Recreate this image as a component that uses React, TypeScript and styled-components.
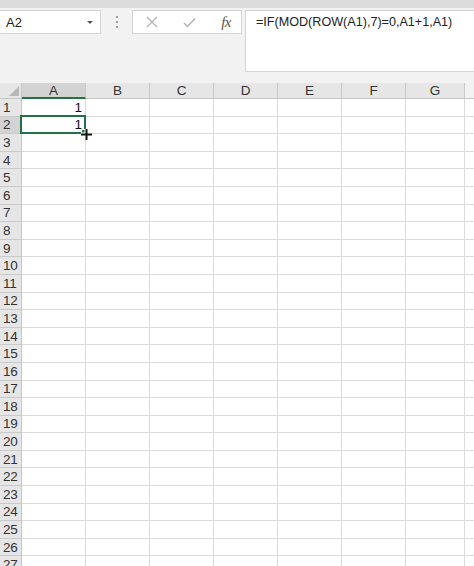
import styled, { createGlobalStyle } from "styled-components";

const GlobalStyle = createGlobalStyle`
  html, body {
    margin: 0;
    padding: 0;
    background: #ffffff;
    overflow: hidden;
  }
  body {
    font-family: "Liberation Sans", Arial, sans-serif;
  }
`;

const GREEN = "#217346";
const GRID = "#dadada";

const Sheet = styled.div`
  width: 474px;
  height: 566px;
  display: flex;
  flex-direction: column;
  overflow: hidden;
`;

const TopStrip = styled.div`
  height: 8px;
  background: #dcdcdc;
`;

const Toolbar = styled.div`
  display: flex;
  align-items: flex-start;
  background: #f2f2f2;
  padding-top: 2px;
  height: 75px;
  box-sizing: border-box;
`;

const NameBox = styled.div`
  width: 101px;
  height: 24px;
  box-sizing: border-box;
  background: #fff;
  border: 1px solid #d4d4d4;
  border-left: none;
  display: flex;
  align-items: center;
  justify-content: space-between;
  padding: 0 7px 0 6px;
  font-size: 13px;
  color: #222;
`;

const DropArrow = styled.span`
  width: 0;
  height: 0;
  border-left: 3px solid transparent;
  border-right: 3px solid transparent;
  border-top: 3px solid #555;
`;

const Grip = styled.div`
  width: 31px;
  height: 24px;
  display: flex;
  flex-direction: column;
  align-items: center;
  justify-content: center;
  gap: 3px;
  span {
    width: 2px;
    height: 2px;
    background: #a0a0a0;
  }
`;

const FxButtons = styled.div`
  width: 110px;
  height: 24px;
  box-sizing: border-box;
  background: #fff;
  border: 1px solid #d4d4d4;
  display: flex;
  align-items: center;
  justify-content: space-between;
  padding: 0 10px 0 13px;
`;

const FxLabel = styled.span`
  font-family: "Liberation Serif", "Times New Roman", serif;
  font-style: italic;
  font-size: 15px;
  color: #555;
  letter-spacing: -0.5px;
`;

const FormulaBox = styled.div`
  flex: 1;
  margin-left: 3px;
  height: 62px;
  box-sizing: border-box;
  background: #fff;
  border: 1px solid #d4d4d4;
  border-right: none;
  padding: 4px 0 0 10px;
  font-size: 12.6px;
  color: #222;
`;

const Grid = styled.div`
  flex: 1;
  display: grid;
  grid-template-columns: 22px repeat(6, 64px) 59px 1fr;
  grid-template-rows: 16px;
  grid-auto-rows: 17.6px;
  align-content: start;
  overflow: hidden;
  font-size: 13.5px;
  background: #fff;
`;

const Corner = styled.div`
  position: relative;
  background: #e6e6e6;
  border-right: 1px solid #c6c6c6;
  border-bottom: 1px solid #c6c6c6;
  box-sizing: border-box;
  &::after {
    content: "";
    position: absolute;
    right: 2px;
    bottom: 2px;
    width: 0;
    height: 0;
    border-left: 10px solid transparent;
    border-bottom: 10px solid #b9b9b9;
  }
`;

const ColHeader = styled.div<{ $active?: boolean }>`
  background: ${(p) => (p.$active ? "#d3d3d3" : "#e6e6e6")};
  border-right: 1px solid #c9c9c9;
  border-bottom: ${(p) => (p.$active ? `2px solid ${GREEN}` : "1px solid #c6c6c6")};
  box-sizing: border-box;
  display: flex;
  align-items: center;
  justify-content: center;
  color: #333;
  font-size: 13.5px;
`;

const HeaderFill = styled.div`
  background: #f2f2f2;
  border-bottom: 1px solid #c6c6c6;
`;

const RowHeader = styled.div<{ $active?: boolean }>`
  background: ${(p) => (p.$active ? "#d3d3d3" : "#e6e6e6")};
  border-right: ${(p) => (p.$active ? `2px solid ${GREEN}` : "1px solid #c6c6c6")};
  border-bottom: 1px solid #c9c9c9;
  box-sizing: border-box;
  display: flex;
  align-items: center;
  padding-left: 3px;
  color: #333;
  font-size: 13.5px;
  letter-spacing: -0.3px;
`;

const Cell = styled.div`
  position: relative;
  border-right: 1px solid ${GRID};
  border-bottom: 1px solid ${GRID};
  box-sizing: border-box;
  display: flex;
  align-items: center;
  justify-content: flex-end;
  padding-right: 3px;
  color: #111;
`;

const EdgeCell = styled.div`
  border-bottom: 1px solid ${GRID};
`;

const ActiveFrame = styled.div`
  position: absolute;
  left: -2px;
  top: -2px;
  right: -1px;
  bottom: -1px;
  border: 2px solid ${GREEN};
  pointer-events: none;
`;

const FillHandle = styled.div`
  position: absolute;
  right: -4px;
  bottom: -4px;
  width: 5px;
  height: 5px;
  background: ${GREEN};
  border: 1px solid #fff;
`;

const PlusCursor = styled.svg`
  position: absolute;
  right: -8px;
  bottom: -8px;
  z-index: 2;
`;

const columns = ["A", "B", "C", "D", "E", "F", "G"];
const rowCount = 28;
const values: Record<string, string> = { A1: "1", A2: "1" };
const active = { col: "A", row: 2 };

function App() {
  return (
    <>
      <GlobalStyle />
      <Sheet>
        <TopStrip />
        <Toolbar>
          <NameBox>
            <span>A2</span>
            <DropArrow />
          </NameBox>
          <Grip>
            <span />
            <span />
            <span />
          </Grip>
          <FxButtons>
            <svg width="12" height="12" viewBox="0 0 12 12">
              <path d="M1 1 L11 11 M11 1 L1 11" stroke="#b3b3b3" strokeWidth="1.3" fill="none" />
            </svg>
            <svg width="13" height="11" viewBox="0 0 13 11">
              <path d="M1 6 L4.5 9.5 L12 1.5" stroke="#b3b3b3" strokeWidth="1.5" fill="none" />
            </svg>
            <FxLabel>fx</FxLabel>
          </FxButtons>
          <FormulaBox>=IF(MOD(ROW(A1),7)=0,A1+1,A1)</FormulaBox>
        </Toolbar>
        <Grid>
          <Corner />
          {columns.map((c) => (
            <ColHeader key={c} $active={c === active.col}>
              {c}
            </ColHeader>
          ))}
          <HeaderFill />
          {Array.from({ length: rowCount }, (_, i) => {
            const row = i + 1;
            return [
              <RowHeader key={`h${row}`} $active={row === active.row}>
                {row}
              </RowHeader>,
              ...columns.map((c) => {
                const id = `${c}${row}`;
                const isActive = c === active.col && row === active.row;
                return (
                  <Cell key={id}>
                    {values[id]}
                    {isActive && (
                      <>
                        <ActiveFrame>
                          <FillHandle />
                        </ActiveFrame>
                        <PlusCursor width="13" height="13" viewBox="0 0 13 13">
                          <path d="M6.5 1 V12 M1 6.5 H12" stroke="#fff" strokeWidth="4" />
                          <path d="M6.5 1 V12 M1 6.5 H12" stroke="#111" strokeWidth="2" />
                        </PlusCursor>
                      </>
                    )}
                  </Cell>
                );
              }),
              <EdgeCell key={`e${row}`} />,
            ];
          })}
        </Grid>
      </Sheet>
    </>
  );
}

export default App;
